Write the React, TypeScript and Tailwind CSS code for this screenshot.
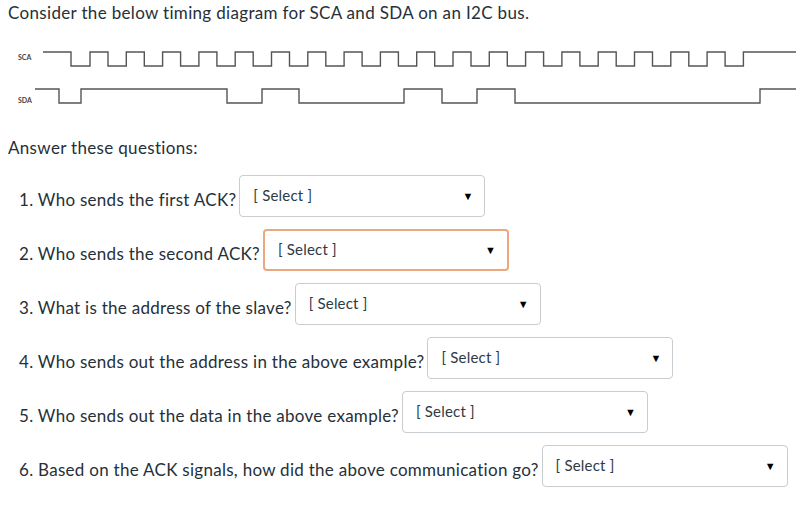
const QUESTIONS = [
  '1. Who sends the first ACK?',
  '2. Who sends the second ACK?',
  '3. What is the address of the slave?',
  '4. Who sends out the address in the above example?',
  '5. Who sends out the data in the above example?',
  '6. Based on the ACK signals, how did the above communication go?',
];

function sclPath() {
  let d = 'M43 52 H71 V66';
  for (let k = 0; k < 19; k++) {
    const rise = 90 + k * 36.3;
    d += ` H${rise.toFixed(1)} V52`;
    if (k < 18) {
      const fall = 108 + k * 36.3;
      d += ` H${fall.toFixed(1)} V66`;
    }
  }
  return d + ' H796';
}

const SDA_PATH =
  'M35 89 H59 V103 H81 V89 H227 V103 H262 V89 H299 V103 H404 V89 H442 V103 H477 V89 H515 V103 H760 V89 H796';

function TimingDiagram() {
  return (
    <svg className="block w-[807px] h-[94px]" viewBox="0 28 807 94" fill="none">
      <text x="18" y="60" fontSize="7" fontWeight="700" fill="#444" fontFamily="Lato, sans-serif">
        SCA
      </text>
      <text x="18" y="103" fontSize="7" fontWeight="700" fill="#444" fontFamily="Lato, sans-serif">
        SDA
      </text>
      <path d={sclPath()} stroke="#555" strokeWidth={1.4} />
      <path d={SDA_PATH} stroke="#555" strokeWidth={1.4} />
    </svg>
  );
}

function FakeSelect({ focused }: { focused?: boolean }) {
  return (
    <div
      className={`flex items-center justify-between w-[246px] h-[42px] shrink-0 rounded-[4px] bg-white pl-[13px] pr-[11px] ${
        focused ? 'border-2 border-[#eda77e]' : 'border border-[#c7cdd1]'
      }`}
    >
      <span className="text-[15px] tracking-[0.2px] text-[#2d3b45] -mt-[1px]">[ Select ]</span>
      <span className="text-[11px] text-black">▼</span>
    </div>
  );
}

export default function App() {
  return (
    <div
      className="w-[807px] h-[510px] bg-white text-[#253039] overflow-hidden"
      style={{ fontFamily: 'Lato, "Noto Sans", sans-serif' }}
    >
      <p className="pl-2 pt-[2px] text-[17px] tracking-[0.33px] leading-[22px] h-[28px]">
        Consider the below timing diagram for SCA and SDA on an I2C bus.
      </p>
      <TimingDiagram />
      <p className="pl-2 mt-[15px] text-[17px] tracking-[0.33px] leading-[22px]">Answer these questions:</p>
      <div className="mt-[16px] pl-[19px] flex flex-col gap-[12px]">
        {QUESTIONS.map((q, i) => (
          <div key={q} className="flex items-center gap-[3px]">
            <span className="text-[17px] tracking-[0.28px] leading-[22px] pt-[7px] whitespace-nowrap">{q}</span>
            <FakeSelect focused={i === 1} />
          </div>
        ))}
      </div>
    </div>
  );
}
